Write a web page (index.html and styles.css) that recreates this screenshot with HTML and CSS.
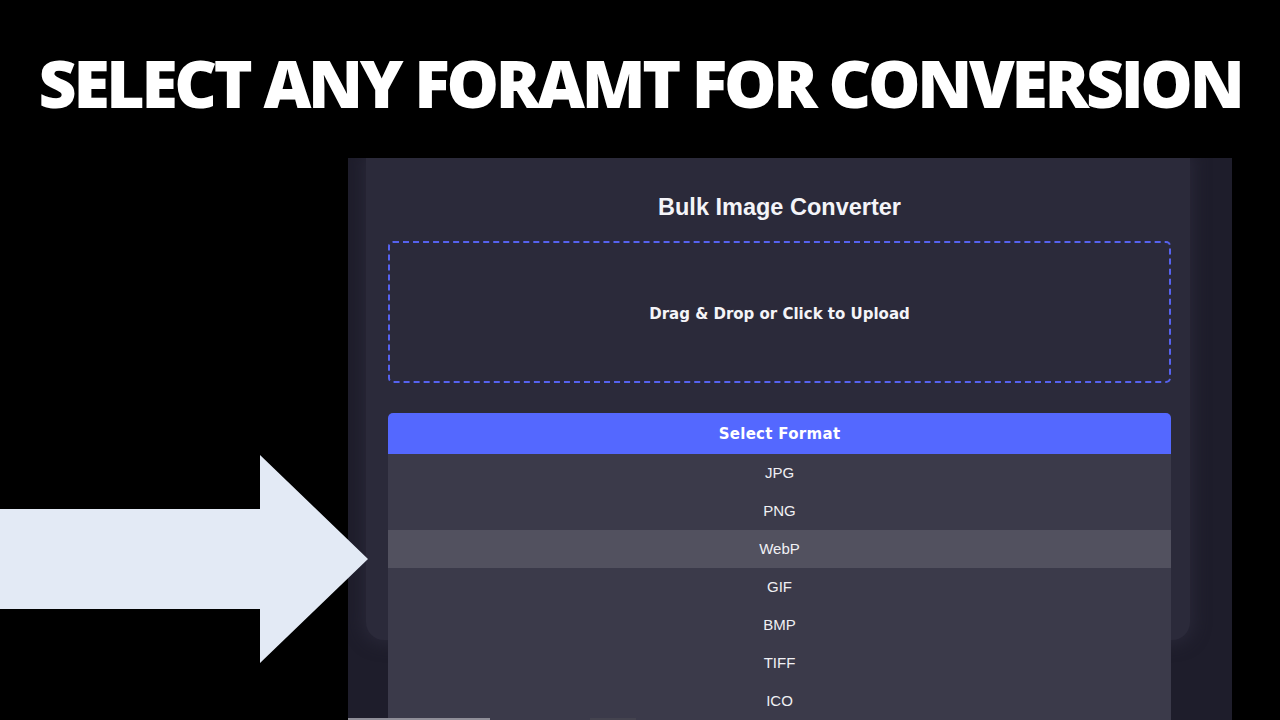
FILE: index.html
```html
<!DOCTYPE html>
<html lang="en">
<head>
<meta charset="utf-8">
<title>Select any format for conversion</title>
<link rel="stylesheet" href="styles.css">
</head>
<body>
<div class="stage">
  <header class="headline">
    <h1>SELECT ANY FORAMT FOR CONVERSION</h1>
  </header>
  <div class="row">
    <div class="left"></div>
    <div class="panel">
      <div class="card">
        <h2 class="card-title">Bulk Image Converter</h2>
        <div class="dropzone">Drag &amp; Drop or Click to Upload</div>
        <div class="select-wrap">
          <div class="select-btn">Select Format</div>
          <ul class="menu">
            <li>JPG</li>
            <li>PNG</li>
            <li class="hover">WebP</li>
            <li>GIF</li>
            <li>BMP</li>
            <li>TIFF</li>
            <li>ICO</li>
          </ul>
        </div>
        <div class="spacer"></div>
      </div>
      <div class="hscroll"><span class="thumb1"></span><span class="thumb2"></span></div>
    </div>
    <svg class="arrow" width="370" height="210" viewBox="0 0 370 210">
      <polygon points="0,54 260,54 260,0 368,104 260,208 260,154 0,154" fill="#e3eaf5"/>
    </svg>
  </div>
</div>
</body>
</html>
```
FILE: styles.css
```css
* { box-sizing: border-box; }
html, body { margin: 0; padding: 0; background: #000; }
body { width: 1280px; height: 720px; overflow: hidden; }

.stage { width: 1280px; height: 720px; display: flex; flex-direction: column; }

.headline { height: 158px; padding-top: 47px; text-align: center; }
.headline h1 {
  margin: 0;
  font-family: "Open Sans", "Liberation Sans", sans-serif;
  font-weight: 800;
  font-size: 66px;
  line-height: 70px;
  color: #fff;
  letter-spacing: -3.3px;
  white-space: nowrap;
}

.row { position: relative; display: flex; flex: 1; }
.left { width: 348px; }

.panel {
  position: relative;
  width: 884px;
  height: 562px;
  background: #1e1d2b;
  overflow: hidden;
  padding: 0 42px 0 18px;
}

.card {
  background: #2b2a3a;
  border-radius: 0 0 18px 18px;
  box-shadow: 0 0 16px 4px rgba(42, 41, 57, 0.85);
  padding: 35px 19px 0 22px;
  display: flex;
  flex-direction: column;
}

.card-title {
  margin: 0 0 20px;
  text-align: center;
  font-family: "Liberation Sans", Arial, sans-serif;
  font-weight: bold;
  font-size: 23.5px;
  line-height: 28px;
  color: #f4f4f8;
}

.dropzone {
  height: 142px;
  border: 2px dashed #5662ee;
  border-radius: 5px;
  display: flex;
  align-items: center;
  justify-content: center;
  font-family: "DejaVu Sans", Verdana, sans-serif;
  font-weight: bold;
  font-size: 15px;
  color: #f4f4f8;
  padding-top: 4px;
}

.select-wrap { position: relative; margin-top: 30px; }
.select-btn {
  height: 41px;
  background: #5468ff;
  border-radius: 5px 5px 0 0;
  display: flex;
  align-items: center;
  justify-content: center;
  font-family: "DejaVu Sans", Verdana, sans-serif;
  font-weight: bold;
  font-size: 15px;
  letter-spacing: 0.3px;
  color: #fff;
}

.menu {
  position: absolute;
  left: 0;
  right: 0;
  top: 41px;
  margin: 0;
  padding: 0;
  list-style: none;
  background: #3b3a4a;
  z-index: 2;
}
.menu li {
  height: 38px;
  display: flex;
  align-items: center;
  justify-content: center;
  font-family: "Liberation Sans", Arial, sans-serif;
  font-size: 15px;
  color: #f0f0f4;
  padding-bottom: 2px;
}
.menu li.hover { background: #52515f; }

.spacer { height: 186px; }

.hscroll {
  position: absolute;
  left: 0;
  right: 0;
  bottom: 0;
  height: 2px;
  z-index: 3;
}
.thumb1 { position: absolute; left: 0; width: 142px; height: 2px; background: #8f8e98; }
.thumb2 { position: absolute; left: 242px; width: 46px; height: 2px; background: #44434f; }

.arrow { position: absolute; left: 0; top: 297px; z-index: 4; }
```
